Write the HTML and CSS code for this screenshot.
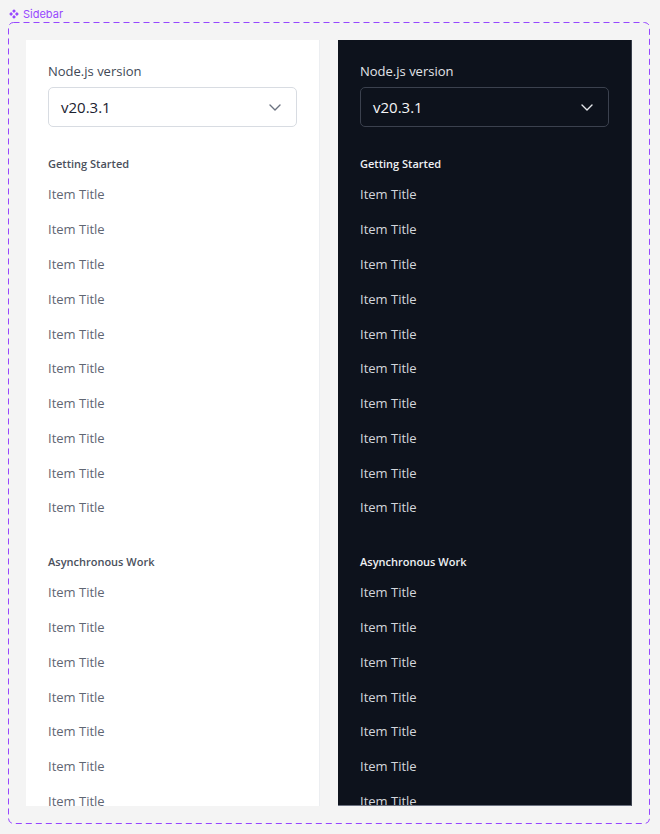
FILE: index.html
```html
<!DOCTYPE html>
<html>
<head>
<meta charset="utf-8">
<link rel="stylesheet" href="styles.css">
</head>
<body>
<div class="frame-label">
  <svg class="comp-icon" viewBox="0 0 12 12" width="10" height="10"><path d="M6 0.2 8.3 2.5 6 4.8 3.7 2.5Z M2.5 3.7 4.8 6 2.5 8.3 0.2 6Z M9.5 3.7 11.8 6 9.5 8.3 7.2 6Z M6 7.2 8.3 9.5 6 11.8 3.7 9.5Z" fill="#9747ff"/></svg>
  <span>Sidebar</span>
</div>
<div class="frame">
  <svg class="frame-outline" width="642" height="802" viewBox="0 0 642 802"><rect x="0.5" y="0.5" width="641" height="801" rx="5" ry="5" fill="none" stroke="#9747ff" stroke-dasharray="6 4"/></svg>

  <aside class="panel light">
    <div class="field-label">Node.js version</div>
    <div class="select">
      <span class="select-value">v20.3.1</span>
      <svg class="chevron" width="12" height="7" viewBox="0 0 12 7"><path d="M1 1 6 6 11 1" fill="none" stroke="currentColor" stroke-width="1.4" stroke-linecap="round" stroke-linejoin="round"/></svg>
    </div>
    <section class="group">
      <h3 class="group-title">Getting Started</h3>
      <ul class="items">
        <li>Item Title</li><li>Item Title</li><li>Item Title</li><li>Item Title</li><li>Item Title</li>
        <li>Item Title</li><li>Item Title</li><li>Item Title</li><li>Item Title</li><li>Item Title</li>
      </ul>
    </section>
    <section class="group">
      <h3 class="group-title">Asynchronous Work</h3>
      <ul class="items">
        <li>Item Title</li><li>Item Title</li><li>Item Title</li><li>Item Title</li><li>Item Title</li>
        <li>Item Title</li><li>Item Title</li><li>Item Title</li>
      </ul>
    </section>
  </aside>

  <aside class="panel dark">
    <div class="field-label">Node.js version</div>
    <div class="select">
      <span class="select-value">v20.3.1</span>
      <svg class="chevron" width="12" height="7" viewBox="0 0 12 7"><path d="M1 1 6 6 11 1" fill="none" stroke="currentColor" stroke-width="1.4" stroke-linecap="round" stroke-linejoin="round"/></svg>
    </div>
    <section class="group">
      <h3 class="group-title">Getting Started</h3>
      <ul class="items">
        <li>Item Title</li><li>Item Title</li><li>Item Title</li><li>Item Title</li><li>Item Title</li>
        <li>Item Title</li><li>Item Title</li><li>Item Title</li><li>Item Title</li><li>Item Title</li>
      </ul>
    </section>
    <section class="group">
      <h3 class="group-title">Asynchronous Work</h3>
      <ul class="items">
        <li>Item Title</li><li>Item Title</li><li>Item Title</li><li>Item Title</li><li>Item Title</li>
        <li>Item Title</li><li>Item Title</li><li>Item Title</li>
      </ul>
    </section>
  </aside>
</div>
</body>
</html>
```

FILE: styles.css
```css
* { box-sizing: border-box; }

html, body {
  margin: 0;
  background: #f4f4f4;
}

body {
  padding-top: 6px;
  font-family: "Open Sans", "Noto Sans", sans-serif;
}

.frame-label {
  display: flex;
  align-items: center;
  gap: 4px;
  height: 16px;
  padding-left: 9px;
  font-family: Inter, "Liberation Sans", sans-serif;
  font-size: 11px;
  line-height: 16px;
  color: #9747ff;
}

.comp-icon { display: block; }

.frame {
  position: relative;
  margin-left: 8px;
  width: 642px;
  height: 802px;
  padding: 18px;
  display: grid;
  grid-template-columns: 1fr 1fr;
  gap: 18px;
}

.frame-outline {
  position: absolute;
  left: 0;
  top: 0;
  pointer-events: none;
}

.panel {
  height: 766px;
  overflow: hidden;
  padding: 21px 22px 0;
}

.panel.light {
  background: #ffffff;
  border-right: 1px solid #eceef1;
}

.panel.dark {
  background: #0d121c;
  border-right: 1px solid #3a404c;
  border-bottom: 1px solid #6b7180;
}

.field-label {
  font-size: 13px;
  line-height: 20px;
}

.select {
  margin-top: 6px;
  height: 40px;
  border-radius: 5px;
  display: flex;
  align-items: center;
  justify-content: space-between;
  padding: 0 15px 0 12px;
}

.select-value {
  font-size: 15px;
  line-height: 22px;
}

.chevron { display: block; }

.group { margin-top: 29px; }

.group-title {
  margin: 0 0 5px;
  font-size: 11px;
  line-height: 16px;
  font-weight: 600;
}

.items {
  list-style: none;
  margin: 0;
  padding: 0;
}

.items li {
  font-size: 13px;
  line-height: 20px;
  padding: 7.4px 0;
}

/* light */
.light .field-label { color: #414856; }
.light .select { border: 1px solid #d8dce2; }
.light .select-value { color: #1c2230; }
.light .chevron { color: #6b7280; }
.light .group-title { color: #4a505c; }
.light .items li { color: #5f6673; }

/* dark */
.dark .field-label { color: #e3e5e9; }
.dark .select { border: 1px solid #3b414e; }
.dark .select-value { color: #f4f5f7; }
.dark .chevron { color: #e5e7eb; }
.dark .group-title { color: #eef0f3; }
.dark .items li { color: #d3d6dc; }
```
